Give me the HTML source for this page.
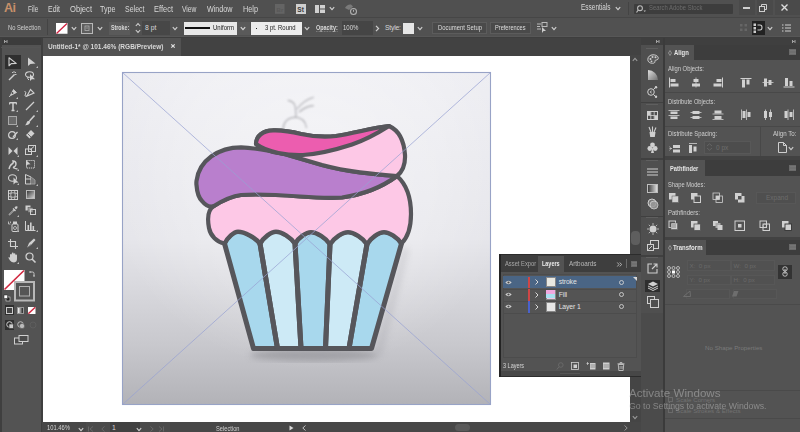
<!DOCTYPE html><html><head><meta charset="utf-8"><style>
*{margin:0;padding:0;box-sizing:border-box}
html,body{width:800px;height:432px;overflow:hidden;background:#4a4a4a;font-family:"Liberation Sans",sans-serif;color:#dcdcdc}
.a{position:absolute}
.t{position:absolute;white-space:nowrap;line-height:1}
svg.a{overflow:visible}
</style></head><body>
<div class="a" style="left:0px;top:0px;width:800px;height:17px;background:#505050;"></div>
<div class="a" style="left:0px;top:16.5px;width:800px;height:1px;background:#464646;"></div>
<div class="a" style="left:0px;top:17.5px;width:800px;height:19.5px;background:#515151;"></div>
<div class="a" style="left:0px;top:35.5px;width:800px;height:1px;background:#575757;"></div>
<div class="a" style="left:0px;top:36.5px;width:800px;height:1.5px;background:#3e3e3e;"></div>
<div class="a" style="left:0px;top:38px;width:42.5px;height:394px;background:#3f3f3f;"></div>
<div class="a" style="left:1.5px;top:38px;width:39px;height:394px;background:#535353;"></div>
<div class="a" style="left:1.5px;top:38px;width:39px;height:7px;background:#3c3c3c;"></div>
<div class="a" style="left:43px;top:38px;width:598px;height:17.5px;background:#424242;"></div>
<div class="a" style="left:43px;top:38px;width:138px;height:17.5px;background:#525252;"></div>
<div class="a" style="left:43px;top:55.5px;width:587px;height:366.5px;background:#ffffff;"></div>
<div class="a" style="left:630px;top:55px;width:11px;height:367px;background:#454545;"></div>
<div class="a" style="left:42px;top:422px;width:599px;height:10px;background:#474747;"></div>
<div class="a" style="left:641px;top:38px;width:23px;height:394px;background:#4b4b4b;"></div>
<div class="a" style="left:664px;top:38px;width:136px;height:394px;background:#535353;"></div>
<div class="t" style="left:4px;top:2px;font-size:12.5px;color:#c8906a;font-weight:bold;letter-spacing:-0.5px;">Ai</div>
<div class="t" id="tx1" style="left:27.75px;top:4.8px;font-size:8.6px;color:#d8d8d8;;transform:scaleX(0.7396);transform-origin:0 0;">File</div>
<div class="t" id="tx2" style="left:48px;top:4.8px;font-size:8.6px;color:#d8d8d8;;transform:scaleX(0.8101);transform-origin:0 0;">Edit</div>
<div class="t" id="tx3" style="left:69.5px;top:4.8px;font-size:8.6px;color:#d8d8d8;;transform:scaleX(0.8855);transform-origin:0 0;">Object</div>
<div class="t" id="tx4" style="left:100px;top:4.8px;font-size:8.6px;color:#d8d8d8;;transform:scaleX(0.8315);transform-origin:0 0;">Type</div>
<div class="t" id="tx5" style="left:125px;top:4.8px;font-size:8.6px;color:#d8d8d8;;transform:scaleX(0.8162);transform-origin:0 0;">Select</div>
<div class="t" id="tx6" style="left:153.5px;top:4.8px;font-size:8.6px;color:#d8d8d8;;transform:scaleX(0.8704);transform-origin:0 0;">Effect</div>
<div class="t" id="tx7" style="left:182px;top:4.8px;font-size:8.6px;color:#d8d8d8;;transform:scaleX(0.7844);transform-origin:0 0;">View</div>
<div class="t" id="tx8" style="left:207px;top:4.8px;font-size:8.6px;color:#d8d8d8;;transform:scaleX(0.8339);transform-origin:0 0;">Window</div>
<div class="t" id="tx9" style="left:242.5px;top:4.8px;font-size:8.6px;color:#d8d8d8;;transform:scaleX(0.8481);transform-origin:0 0;">Help</div>
<svg class="a" style="left:274.5px;top:3.7px;" width="10" height="10" viewBox="0 0 10 10"><rect x="0" y="0" width="9.5" height="9.8" fill="#646464"/><text x="1.6" y="7.8" font-size="6" fill="#585858" font-family="Liberation Sans" font-weight="bold">Br</text></svg>
<svg class="a" style="left:295.5px;top:4px;" width="10" height="10" viewBox="0 0 10 10"><rect x="0" y="0" width="10" height="10" fill="#cfcfcf"/><text x="1.3" y="8" font-size="6.5" fill="#3a3a3a" font-family="Liberation Sans" font-weight="bold">St</text></svg>
<svg class="a" style="left:314.5px;top:5px;" width="10" height="8" viewBox="0 0 10 8"><rect x="0" y="0" width="4" height="8" fill="#d0d0d0"/><rect x="5" y="0" width="5" height="3.5" fill="#d0d0d0"/><rect x="5" y="4.5" width="5" height="3.5" fill="#d0d0d0"/></svg>
<svg class="a" style="left:329px;top:6px;" width="6" height="5" viewBox="0 0 6 5"><path d="M0.8 1.2 L3 3.6 L5.2 1.2" stroke="#cfcfcf" stroke-width="1.2" fill="none"/></svg>
<svg class="a" style="left:344px;top:3px;" width="14" height="12" viewBox="0 0 14 12"><path d="M1 5 Q3 1 7 1.5 L9 3.5 L5 7 Z" fill="#7a7a7a"/><circle cx="9.5" cy="8.5" r="3" stroke="#b0b0b0" stroke-width="1.1" fill="#505050"/><path d="M9.5 6.8 V8.8" stroke="#b0b0b0" stroke-width="1"/></svg>
<div class="t" id="tx10" style="left:581px;top:4.3px;font-size:8.2px;color:#d8d8d8;letter-spacing:0px;transform:scaleX(0.7903);transform-origin:0 0;">Essentials</div>
<svg class="a" style="left:615px;top:6px;" width="6" height="5" viewBox="0 0 6 5"><path d="M0.8 1.2 L3 3.6 L5.2 1.2" stroke="#cfcfcf" stroke-width="1.2" fill="none"/></svg>
<div class="a" style="left:633.5px;top:3.5px;width:99px;height:10.5px;background:#3d3d3d;border-radius:1px"></div>
<svg class="a" style="left:636px;top:5px;" width="11" height="8" viewBox="0 0 11 8"><circle cx="4" cy="3.2" r="2.4" stroke="#bdbdbd" stroke-width="1.1" fill="none"/><path d="M2.3 5 L0.5 7.5" stroke="#bdbdbd" stroke-width="1.2"/><path d="M7.5 5.5 L10 5.5 L8.75 7 Z" fill="#bdbdbd"/></svg>
<div class="t" id="tx11" style="left:649px;top:5.2px;font-size:6.8px;color:#6c6c6c;;transform:scaleX(0.8686);transform-origin:0 0;">Search Adobe Stock</div>
<div class="a" style="left:739px;top:0px;width:16px;height:15px;background:#4a4a4a;"></div>
<div class="a" style="left:757px;top:0px;width:16px;height:15px;background:#4a4a4a;"></div>
<div class="a" style="left:775px;top:0px;width:25px;height:15px;background:#4a4a4a;"></div>
<div class="a" style="left:628px;top:2px;width:0.8px;height:13px;background:#444;"></div>
<div class="a" style="left:743px;top:7px;width:6.5px;height:1.5px;background:#d0d0d0;"></div>
<svg class="a" style="left:759px;top:4px;" width="8" height="8" viewBox="0 0 8 8"><rect x="0.5" y="2.5" width="5" height="5" stroke="#cfcfcf" fill="none"/><path d="M2.5 2.5 V0.5 H7.5 V5.5 H5.5" stroke="#cfcfcf" fill="none"/></svg>
<svg class="a" style="left:780.5px;top:4px;" width="7" height="7" viewBox="0 0 7 7"><path d="M0.5 0.5 L6.5 6.5 M6.5 0.5 L0.5 6.5" stroke="#dcdcdc" stroke-width="1.4"/></svg>
<div class="t" id="tx12" style="left:8.4px;top:24.5px;font-size:6.8px;color:#d0d0d0;;transform:scaleX(0.8457);transform-origin:0 0;">No Selection</div>
<div class="a" style="left:47px;top:19px;width:1px;height:16px;background:#444;"></div>
<svg class="a" style="left:55.5px;top:22.5px;" width="12" height="11" viewBox="0 0 12 11"><rect x="0" y="0" width="11.5" height="10.75" fill="#fff"/><path d="M0.5 10.5 L11 0.5" stroke="#d02040" stroke-width="1.3"/></svg>
<svg class="a" style="left:70.5px;top:26px;" width="6" height="5" viewBox="0 0 6 5"><path d="M0.8 1.2 L3 3.6 L5.2 1.2" stroke="#cfcfcf" stroke-width="1.2" fill="none"/></svg>
<svg class="a" style="left:81px;top:22.5px;" width="12" height="11" viewBox="0 0 12 11"><rect x="0.5" y="0.5" width="11" height="10" fill="#5e5e5e" stroke="#b8b8b8"/><rect x="4" y="3" width="4" height="4.5" fill="none" stroke="#b0b0b0" stroke-width="0.8"/><path d="M4.8 5 H7.2" stroke="#b0b0b0" stroke-width="0.7"/></svg>
<svg class="a" style="left:96.5px;top:26px;" width="6" height="5" viewBox="0 0 6 5"><path d="M0.8 1.2 L3 3.6 L5.2 1.2" stroke="#cfcfcf" stroke-width="1.2" fill="none"/></svg>
<div class="a" style="left:108.5px;top:21.5px;width:21px;height:13px;background:#5a5a5a;"></div>
<div class="t" id="tx13" style="left:110.75px;top:24.5px;font-size:6.8px;color:#dadada;font-weight:bold;transform:scaleX(0.7792);transform-origin:0 0;">Stroke:</div>
<svg class="a" style="left:135px;top:22px;" width="6" height="12" viewBox="0 0 6 12"><path d="M0.8 4 L3 1.6 L5.2 4 M0.8 8 L3 10.4 L5.2 8" stroke="#cfcfcf" stroke-width="1.1" fill="none"/></svg>
<div class="a" style="left:142px;top:21px;width:28px;height:14px;background:#474747;"></div>
<div class="t" style="left:145px;top:24.5px;font-size:6.8px;color:#d8d8d8;;">8 pt</div>
<svg class="a" style="left:171.5px;top:26px;" width="6" height="5" viewBox="0 0 6 5"><path d="M0.8 1.2 L3 3.6 L5.2 1.2" stroke="#cfcfcf" stroke-width="1.2" fill="none"/></svg>
<div class="a" style="left:183.5px;top:21.5px;width:53px;height:13px;background:#e8e8e8;"></div>
<div class="a" style="left:185px;top:27.3px;width:25px;height:2.2px;background:#111;"></div>
<div class="t" id="tx14" style="left:212.5px;top:24.5px;font-size:6.8px;color:#1a1a1a;;transform:scaleX(0.8825);transform-origin:0 0;">Uniform</div>
<div class="a" style="left:236.5px;top:21.5px;width:13px;height:13px;background:#5a5a5a;"></div>
<svg class="a" style="left:240px;top:26px;" width="6" height="5" viewBox="0 0 6 5"><path d="M0.8 1.2 L3 3.6 L5.2 1.2" stroke="#d8d8d8" stroke-width="1.2" fill="none"/></svg>
<div class="a" style="left:251px;top:21.5px;width:50.5px;height:13px;background:#ececec;"></div>
<div class="a" style="left:255.5px;top:27.5px;width:1.5px;height:1.5px;background:#222;"></div>
<div class="t" id="tx15" style="left:265px;top:24.5px;font-size:6.8px;color:#1a1a1a;;transform:scaleX(0.8676);transform-origin:0 0;">3 pt. Round</div>
<svg class="a" style="left:304px;top:26px;" width="6" height="5" viewBox="0 0 6 5"><path d="M0.8 1.2 L3 3.6 L5.2 1.2" stroke="#cfcfcf" stroke-width="1.2" fill="none"/></svg>
<div class="t" id="tx16" style="left:316.25px;top:24.5px;font-size:6.8px;color:#dadada;font-weight:bold;border-bottom:0.8px dotted #8a8a8a;transform:scaleX(0.7995);transform-origin:0 0;">Opacity:</div>
<div class="a" style="left:342px;top:21px;width:31px;height:14px;background:#454545;"></div>
<div class="t" id="tx17" style="left:343px;top:24.5px;font-size:6.8px;color:#d8d8d8;;transform:scaleX(0.8913);transform-origin:0 0;">100%</div>
<svg class="a" style="left:374.5px;top:25px;" width="5" height="7" viewBox="0 0 5 7"><path d="M1 0.8 L3.6 3.5 L1 6.2" stroke="#cfcfcf" stroke-width="1.2" fill="none"/></svg>
<div class="t" style="left:385px;top:24.5px;font-size:6.8px;color:#d6d6d6;letter-spacing:-0.2px;">Style:</div>
<div class="a" style="left:402.5px;top:22.5px;width:11.5px;height:11px;background:#e6e6e6;"></div>
<svg class="a" style="left:417px;top:26px;" width="6" height="5" viewBox="0 0 6 5"><path d="M0.8 1.2 L3 3.6 L5.2 1.2" stroke="#cfcfcf" stroke-width="1.2" fill="none"/></svg>
<div class="a" style="left:432px;top:22px;width:54.5px;height:12px;background:#4a4a4a;border:1px solid #5c5c5c"></div>
<div class="t" id="tx18" style="left:437.5px;top:24.7px;font-size:6.8px;color:#dedede;;transform:scaleX(0.8689);transform-origin:0 0;">Document Setup</div>
<div class="a" style="left:489.5px;top:22px;width:41px;height:12px;background:#4a4a4a;border:1px solid #5c5c5c"></div>
<div class="t" id="tx19" style="left:495px;top:24.7px;font-size:6.8px;color:#dedede;;transform:scaleX(0.8321);transform-origin:0 0;">Preferences</div>
<svg class="a" style="left:537px;top:22px;" width="11" height="11" viewBox="0 0 11 11"><path d="M0 2 H4 M0 4.5 H3 M0 7 H4" stroke="#bbb" stroke-width="1"/><rect x="5" y="0.5" width="5" height="4" fill="none" stroke="#bbb"/><path d="M5 5 L9 9 L6.5 9 L5 11 Z" fill="#ccc"/></svg>
<svg class="a" style="left:550.5px;top:26px;" width="6" height="5" viewBox="0 0 6 5"><path d="M0.8 1.2 L3 3.6 L5.2 1.2" stroke="#cfcfcf" stroke-width="1.2" fill="none"/></svg>
<svg class="a" style="left:740px;top:24px;" width="7" height="7" viewBox="0 0 7 7"><rect x="0" y="0" width="2.5" height="2.5" fill="#666"/><rect x="4.5" y="0" width="2.5" height="2.5" fill="#666"/><rect x="0" y="4.5" width="2.5" height="2.5" fill="#666"/><rect x="4.5" y="4.5" width="2.5" height="2.5" fill="#666"/></svg>
<div class="a" style="left:751.5px;top:21px;width:13px;height:13.5px;background:#222;"></div>
<svg class="a" style="left:753px;top:22.5px;" width="10" height="11" viewBox="0 0 10 11"><rect x="0.5" y="0.5" width="2.5" height="2.5" fill="#ccc"/><rect x="0.5" y="4" width="2.5" height="2.5" fill="#ccc"/><rect x="0.5" y="7.5" width="2.5" height="2.5" fill="#ccc"/><path d="M4.5 2 H7 Q9 2 9 4.5 Q9 7 7 7 H4.5" stroke="#ccc" stroke-width="1.1" fill="none"/></svg>
<svg class="a" style="left:767px;top:26px;" width="6" height="5" viewBox="0 0 6 5"><path d="M0.8 1.2 L3 3.6 L5.2 1.2" stroke="#cfcfcf" stroke-width="1.2" fill="none"/></svg>
<svg class="a" style="left:782px;top:24px;" width="9" height="8" viewBox="0 0 9 8"><path d="M0 1 H1.5 M3 1 H9 M0 4 H1.5 M3 4 H9 M0 7 H1.5 M3 7 H9" stroke="#cfcfcf" stroke-width="1.1"/></svg>
<div class="t" id="tx20" style="left:48px;top:43px;font-size:7.4px;color:#d8d8d8;font-weight:bold;transform:scaleX(0.8827);transform-origin:0 0;">Untitled-1* @ 101.46% (RGB/Preview)</div>
<svg class="a" style="left:170.5px;top:44px;" width="4" height="4" viewBox="0 0 4 4"><path d="M0.3 0.3 L3.7 3.7 M3.7 0.3 L0.3 3.7" stroke="#e0e0e0" stroke-width="1.2"/></svg>
<svg class="a" style="left:4px;top:40px;" width="4" height="3" viewBox="0 0 4 3"><path d="M0.5 0 V3 M3 0 V3" stroke="#bbb" stroke-width="0.8"/><path d="M1 1.5 H2.5" stroke="#bbb" stroke-width="0.8"/></svg>
<div class="a" style="left:1px;top:47px;width:39px;height:1px;background:#555;"></div>
<div class="a" style="left:4.5px;top:55px;width:16px;height:13.5px;background:#2f2f2f;"></div>
<svg class="a" style="left:7.5px;top:57px;" width="9" height="10" viewBox="0 0 9 10"><path d="M1 0.8 L1 8.8 L3.2 6.6 L8.2 6.4 Z" stroke="#d0d0d0" stroke-width="1.1" fill="none" stroke-linejoin="round"/></svg>
<svg class="a" style="left:26.5px;top:56.5px;" width="9" height="10" viewBox="0 0 9 10"><path d="M1 0.5 L1 9 L3.4 6.9 L8.5 6.6 Z" fill="#d0d0d0"/></svg>
<svg class="a" style="left:36px;top:66px;" width="2" height="2" viewBox="0 0 2 2"><path d="M2 0 V2 H0 Z" fill="#bdbdbd"/></svg>
<svg class="a" style="left:8px;top:71px;" width="9" height="10" viewBox="0 0 9 10"><path d="M1 9 L6.5 3.5" stroke="#d0d0d0" stroke-width="1.4"/><path d="M6 0 V2 M8.5 3.5 H6.5 M4 1 L5 2 M8 1 L7 2" stroke="#d0d0d0" stroke-width="0.9"/></svg>
<svg class="a" style="left:24.5px;top:71px;" width="11" height="10" viewBox="0 0 11 10"><ellipse cx="4.5" cy="3.5" rx="4" ry="2.8" stroke="#d0d0d0" stroke-width="1.1" fill="none"/><path d="M3 6 Q2 8 4 9" stroke="#d0d0d0" stroke-width="1" fill="none"/><path d="M5 3 L5 10 L6.8 8.3 L10 8.2 Z" fill="#d0d0d0"/></svg>
<svg class="a" style="left:8px;top:88px;" width="9" height="10" viewBox="0 0 9 10"><path d="M2 8 L1 9 M2.2 7.8 L5.5 1.5 L8.5 4.5 L2.2 7.8 Z" fill="#d0d0d0" stroke="#d0d0d0" stroke-width="0.8"/><circle cx="4.5" cy="5" r="0.9" fill="#4b4b4b"/></svg>
<svg class="a" style="left:16px;top:97px;" width="2" height="2" viewBox="0 0 2 2"><path d="M2 0 V2 H0 Z" fill="#bdbdbd"/></svg>
<svg class="a" style="left:24px;top:88px;" width="11" height="10" viewBox="0 0 11 10"><path d="M3 8 L6.5 1.5 L10 5 Z" fill="none" stroke="#d0d0d0" stroke-width="1.1"/><path d="M3 8 Q0 9 1.5 6 Q2.5 4 0.5 3" stroke="#d0d0d0" stroke-width="1" fill="none"/></svg>
<svg class="a" style="left:9px;top:102px;" width="8" height="9" viewBox="0 0 8 9"><path d="M0.5 0.8 H7.5 M4 0.8 V8.5 M2.5 8.5 H5.5" stroke="#d0d0d0" stroke-width="1.5"/><path d="M0.6 0.5 V2.5 M7.4 0.5 V2.5" stroke="#d0d0d0" stroke-width="1.1"/></svg>
<svg class="a" style="left:16px;top:110px;" width="2" height="2" viewBox="0 0 2 2"><path d="M2 0 V2 H0 Z" fill="#bdbdbd"/></svg>
<svg class="a" style="left:25px;top:101px;" width="10" height="10" viewBox="0 0 10 10"><path d="M1 9 L9 1" stroke="#d0d0d0" stroke-width="1.2"/></svg>
<svg class="a" style="left:36px;top:110px;" width="2" height="2" viewBox="0 0 2 2"><path d="M2 0 V2 H0 Z" fill="#bdbdbd"/></svg>
<svg class="a" style="left:8px;top:116px;" width="9" height="9" viewBox="0 0 9 9"><rect x="0.5" y="0.5" width="8" height="8" fill="#6a6a6a" stroke="#a8a8a8"/></svg>
<svg class="a" style="left:16px;top:125px;" width="2" height="2" viewBox="0 0 2 2"><path d="M2 0 V2 H0 Z" fill="#bdbdbd"/></svg>
<svg class="a" style="left:25px;top:115px;" width="10" height="11" viewBox="0 0 10 11"><path d="M9.5 0.5 L4.5 6" stroke="#d0d0d0" stroke-width="1.6"/><path d="M4.6 5.8 Q2 5.5 1.5 8 Q1.2 9.5 0 10.3 Q3.5 10.5 4.8 8.2 Q5.5 7 4.6 5.8 Z" fill="#d0d0d0"/></svg>
<svg class="a" style="left:36px;top:125px;" width="2" height="2" viewBox="0 0 2 2"><path d="M2 0 V2 H0 Z" fill="#bdbdbd"/></svg>
<svg class="a" style="left:8px;top:129px;" width="10" height="10" viewBox="0 0 10 10"><circle cx="4" cy="6" r="3.4" stroke="#d0d0d0" stroke-width="1.2" fill="none"/><path d="M5 8 L9.5 3" stroke="#d0d0d0" stroke-width="1.2"/></svg>
<svg class="a" style="left:16px;top:138px;" width="2" height="2" viewBox="0 0 2 2"><path d="M2 0 V2 H0 Z" fill="#bdbdbd"/></svg>
<svg class="a" style="left:25px;top:129px;" width="10" height="10" viewBox="0 0 10 10"><path d="M1 6 L6 1 L9.5 4.5 L4.5 9.5 Z" fill="#d0d0d0"/><path d="M2.5 4.5 L6 8" stroke="#4b4b4b" stroke-width="0.8"/></svg>
<svg class="a" style="left:8px;top:146px;" width="10" height="10" viewBox="0 0 10 10"><path d="M0.5 1 L4.5 5 L0.5 9 Z" fill="#d0d0d0"/><path d="M9.5 1 L5.5 5 L9.5 9 Z" fill="#d0d0d0"/></svg>
<svg class="a" style="left:17px;top:155px;" width="2" height="2" viewBox="0 0 2 2"><path d="M2 0 V2 H0 Z" fill="#bdbdbd"/></svg>
<svg class="a" style="left:25px;top:145px;" width="11" height="10" viewBox="0 0 11 10"><rect x="0.5" y="4" width="6" height="5.5" stroke="#d0d0d0" fill="none"/><rect x="3.5" y="0.5" width="7" height="6" stroke="#d0d0d0" fill="none"/><path d="M5 5 L9 1.5" stroke="#d0d0d0"/></svg>
<svg class="a" style="left:36px;top:155px;" width="2" height="2" viewBox="0 0 2 2"><path d="M2 0 V2 H0 Z" fill="#bdbdbd"/></svg>
<svg class="a" style="left:8px;top:160px;" width="10" height="10" viewBox="0 0 10 10"><path d="M1 9 Q2 5 4 4 Q6 3 5 1 Q8 1 8 4 Q8 6 6 7 Q4 8 9.5 9" stroke="#d0d0d0" stroke-width="1.4" fill="none"/></svg>
<svg class="a" style="left:17px;top:169px;" width="2" height="2" viewBox="0 0 2 2"><path d="M2 0 V2 H0 Z" fill="#bdbdbd"/></svg>
<svg class="a" style="left:25px;top:159px;" width="11" height="11" viewBox="0 0 11 11"><rect x="1.5" y="1.5" width="8" height="7.5" stroke="#d0d0d0" stroke-dasharray="1.2 0.8" fill="none"/><path d="M1 1 L1 7 L2.8 5.4 L5.5 5.2 Z" fill="#d0d0d0"/></svg>
<svg class="a" style="left:7.5px;top:174px;" width="11" height="11" viewBox="0 0 11 11"><ellipse cx="4.5" cy="4" rx="4" ry="3.3" stroke="#d0d0d0" stroke-width="1.1" fill="none"/><path d="M5.5 3.5 L5.5 10.5 L7.3 8.8 L10.5 8.6 Z" fill="#d0d0d0"/></svg>
<svg class="a" style="left:17px;top:183px;" width="2" height="2" viewBox="0 0 2 2"><path d="M2 0 V2 H0 Z" fill="#bdbdbd"/></svg>
<svg class="a" style="left:25px;top:174px;" width="11" height="11" viewBox="0 0 11 11"><path d="M0.5 0.5 L6 3 L6 10 L0.5 10 Z" stroke="#d0d0d0" fill="none"/><path d="M6 3 L10 6 L10 10 L6 10" stroke="#9a9a9a" fill="#7a7a7a"/><path d="M0.5 5 H6" stroke="#d0d0d0"/></svg>
<svg class="a" style="left:36px;top:184px;" width="2" height="2" viewBox="0 0 2 2"><path d="M2 0 V2 H0 Z" fill="#bdbdbd"/></svg>
<svg class="a" style="left:8px;top:190px;" width="10" height="10" viewBox="0 0 10 10"><rect x="0.5" y="0.5" width="9" height="9" stroke="#d0d0d0" fill="none"/><path d="M0.5 3.5 Q5 2 9.5 3.5 M0.5 6.5 Q5 8 9.5 6.5 M3.5 0.5 Q2 5 3.5 9.5 M6.5 0.5 Q8 5 6.5 9.5" stroke="#d0d0d0" stroke-width="0.8" fill="none"/></svg>
<div class="a" style="left:25.5px;top:190px;width:9px;height:9px;background:linear-gradient(135deg,#3a3a3a,#d0d0d0);border:0.5px solid #bbb"></div>
<svg class="a" style="left:8px;top:205px;" width="10" height="11" viewBox="0 0 10 11"><path d="M1 10 L6 5 M5 3.5 L7.5 6" stroke="#d0d0d0" stroke-width="1.4"/><path d="M6.5 2.5 Q8 0.5 9.5 1.5 Q10 3 8 4.5 Z" fill="#d0d0d0"/><path d="M1.2 9.8 L5.3 5.7" stroke="#4b4b4b" stroke-width="0.5"/></svg>
<svg class="a" style="left:17px;top:215px;" width="2" height="2" viewBox="0 0 2 2"><path d="M2 0 V2 H0 Z" fill="#bdbdbd"/></svg>
<svg class="a" style="left:25px;top:205px;" width="11" height="10" viewBox="0 0 11 10"><rect x="0.5" y="0.5" width="5" height="5" fill="#d0d0d0"/><rect x="3" y="2.5" width="5" height="5" fill="#9a9a9a" stroke="#4b4b4b" stroke-width="0.5"/><rect x="5.5" y="4.5" width="5" height="5" stroke="#d0d0d0" fill="none"/></svg>
<svg class="a" style="left:7.5px;top:221px;" width="11" height="11" viewBox="0 0 11 11"><path d="M0.5 3 H2.5 M0.5 0.5 V3 M2.5 0.5 V2" stroke="#d0d0d0" stroke-width="0.8"/><rect x="4" y="3" width="6" height="7.5" rx="1" stroke="#d0d0d0" fill="none"/><rect x="5" y="0.5" width="4" height="2.5" fill="#d0d0d0"/><circle cx="7" cy="7" r="1.5" stroke="#d0d0d0" fill="none" stroke-width="0.8"/></svg>
<svg class="a" style="left:17px;top:230px;" width="2" height="2" viewBox="0 0 2 2"><path d="M2 0 V2 H0 Z" fill="#bdbdbd"/></svg>
<svg class="a" style="left:25px;top:221px;" width="11" height="10" viewBox="0 0 11 10"><path d="M0.5 0 V9.5 H10.5" stroke="#d0d0d0" fill="none"/><rect x="2.5" y="4" width="1.6" height="5.5" fill="#d0d0d0"/><rect x="5" y="1.5" width="1.6" height="8" fill="#d0d0d0"/><rect x="7.5" y="5" width="1.6" height="4.5" fill="#d0d0d0"/></svg>
<svg class="a" style="left:36px;top:230px;" width="2" height="2" viewBox="0 0 2 2"><path d="M2 0 V2 H0 Z" fill="#bdbdbd"/></svg>
<svg class="a" style="left:8px;top:239px;" width="10" height="10" viewBox="0 0 10 10"><path d="M2.5 0 V7.5 H10 M0 2.5 H7.5 V10" stroke="#d0d0d0" stroke-width="1.1" fill="none"/></svg>
<svg class="a" style="left:26px;top:238px;" width="10" height="11" viewBox="0 0 10 11"><path d="M1 10 L3 5 L8 0.5 L9.5 2 L5 7 Z" fill="#d0d0d0"/><path d="M1 10 L5 6.5" stroke="#4b4b4b" stroke-width="0.6"/></svg>
<svg class="a" style="left:36px;top:247px;" width="2" height="2" viewBox="0 0 2 2"><path d="M2 0 V2 H0 Z" fill="#bdbdbd"/></svg>
<svg class="a" style="left:8px;top:252px;" width="10" height="11" viewBox="0 0 10 11"><path d="M2 6 V3 Q2 2 3 2 Q3.8 2 3.8 3 V1.5 Q3.8 0.6 4.7 0.6 Q5.6 0.6 5.6 1.5 V2 Q5.6 1.2 6.5 1.2 Q7.4 1.2 7.4 2.2 V3.2 Q7.5 2.5 8.3 2.6 Q9 2.8 9 3.6 V7 Q9 10 6 10.5 Q3.5 10.5 2 8.5 L0.5 6 Q0.3 5 1.2 5 Z" fill="#d0d0d0"/></svg>
<svg class="a" style="left:17px;top:262px;" width="2" height="2" viewBox="0 0 2 2"><path d="M2 0 V2 H0 Z" fill="#bdbdbd"/></svg>
<svg class="a" style="left:25px;top:252px;" width="11" height="11" viewBox="0 0 11 11"><circle cx="4.5" cy="4.5" r="3.5" stroke="#d0d0d0" stroke-width="1.2" fill="none"/><path d="M7 7 L10.5 10.5" stroke="#d0d0d0" stroke-width="1.6"/></svg>
<svg class="a" style="left:4px;top:270px;" width="21" height="21" viewBox="0 0 21 21"><rect x="0" y="0" width="20.5" height="20" fill="#fff"/><path d="M0.5 19.5 L20 0.5" stroke="#d0263e" stroke-width="1.6"/></svg>
<svg class="a" style="left:13.5px;top:280.5px;" width="22" height="21" viewBox="0 0 22 21"><rect x="0" y="0" width="21" height="20.5" fill="#b8b8b8"/><rect x="2" y="2" width="17" height="16.5" fill="#555"/><rect x="5.5" y="5.5" width="10" height="9.5" fill="#555" stroke="#b0b0b0" stroke-width="1"/></svg>
<svg class="a" style="left:29px;top:271px;" width="6" height="6" viewBox="0 0 6 6"><path d="M0.5 1 H3.5 Q5 1 5 2.5 V5.5" stroke="#d0d0d0" stroke-width="0.9" fill="none"/><path d="M0 1 L1.5 0 V2 Z M5 6 L4 4.5 H6 Z" fill="#d0d0d0"/></svg>
<svg class="a" style="left:4px;top:294.5px;" width="6" height="6" viewBox="0 0 6 6"><rect x="2" y="2" width="4" height="4" fill="#222" stroke="#ddd" stroke-width="0.6"/><rect x="0" y="0" width="3.5" height="3.5" fill="#fff" stroke="#222" stroke-width="0.5"/></svg>
<div class="a" style="left:4.5px;top:305px;width:9px;height:10px;background:#2f2f2f;"></div>
<svg class="a" style="left:5.5px;top:306.5px;" width="7" height="7" viewBox="0 0 7 7"><rect x="0.5" y="0.5" width="6" height="6" fill="#444" stroke="#ccc"/></svg>
<div class="a" style="left:17px;top:306.5px;width:6.5px;height:7px;background:linear-gradient(90deg,#fff,#222);border:0.5px solid #999"></div>
<svg class="a" style="left:28px;top:306.5px;" width="8" height="7" viewBox="0 0 8 7"><rect x="0" y="0" width="7.5" height="7" fill="#fff"/><path d="M0.3 6.7 L7.2 0.3" stroke="#d0263e" stroke-width="1.4"/></svg>
<div class="a" style="left:4.5px;top:320px;width:9px;height:10px;background:#2f2f2f;"></div>
<svg class="a" style="left:5.5px;top:321px;" width="8" height="8" viewBox="0 0 8 8"><circle cx="3.5" cy="3.5" r="2.8" fill="none" stroke="#ccc"/><rect x="3" y="3" width="4.5" height="4.5" fill="#ccc" stroke="#2f2f2f" stroke-width="0.6"/></svg>
<svg class="a" style="left:16.5px;top:321px;" width="8" height="8" viewBox="0 0 8 8"><circle cx="3.5" cy="3.5" r="2.8" fill="none" stroke="#bbb"/><circle cx="5" cy="5" r="2.6" fill="#bbb" stroke="#4b4b4b" stroke-width="0.5"/></svg>
<svg class="a" style="left:28.5px;top:321px;" width="8" height="8" viewBox="0 0 8 8"><circle cx="4" cy="4" r="3" fill="none" stroke="#5e5e5e"/></svg>
<svg class="a" style="left:14px;top:335px;" width="15" height="10" viewBox="0 0 15 10"><rect x="0.5" y="3" width="8" height="6" stroke="#d0d0d0" fill="#4b4b4b"/><rect x="5" y="0.5" width="9" height="6" stroke="#d0d0d0" fill="#4b4b4b"/></svg>
<svg class="a" style="left:0px;top:0px;" width="800" height="432" viewBox="0 0 800 432">
<defs>
<linearGradient id="bgG" x1="0" y1="0" x2="0" y2="1">
<stop offset="0" stop-color="#ededf2"/>
<stop offset="0.5" stop-color="#e5e5ea"/>
<stop offset="0.62" stop-color="#dbdbe0"/>
<stop offset="0.82" stop-color="#c8c8cd"/>
<stop offset="1" stop-color="#b2b2b7"/>
</linearGradient>
<radialGradient id="radG" cx="310" cy="160" r="210" gradientUnits="userSpaceOnUse"><stop offset="0" stop-color="#ffffff" stop-opacity="0.45"/><stop offset="0.6" stop-color="#ffffff" stop-opacity="0.25"/><stop offset="1" stop-color="#ffffff" stop-opacity="0"/></radialGradient>
<filter id="blur3"><feGaussianBlur stdDeviation="3"/></filter>
<filter id="blur1"><feGaussianBlur stdDeviation="0.9"/></filter>
</defs>
<rect x="122" y="72" width="369" height="333" fill="url(#bgG)"/>
<rect x="122" y="72" width="369" height="333" fill="url(#radG)"/>
<ellipse cx="314" cy="355" rx="64" ry="6.5" fill="#8a8a90" opacity="0.6" filter="url(#blur3)"/>
<path d="M403 246 L409 250 L382 356 L374 352 Z" fill="#9a9aa0" opacity="0.25" filter="url(#blur3)"/>
<g stroke="#adadb2" stroke-width="1.15" fill="none" filter="url(#blur1)">
<path d="M283 129 Q284 118 295 117.3 Q305 117.5 306.5 128"/>
<path d="M296 117.3 Q296 106 294 103.5 Q291 100.5 287.7 100.4"/>
<path d="M297 109 Q304 100 313.8 97.3"/>
<path d="M299.2 112 Q306 106 313.8 105.6"/>
</g>
<g stroke="#56565b" stroke-width="5" stroke-linejoin="round">
<path d="M224.5 243.5 L253.5 348.5 L371.5 348.5 L401.5 243.5 C398.0 237.5 389.2 232.0 384.0 232.0 C378.9 232.0 370.4 238.0 367.0 244.0 C363.2 238.0 353.7 232.0 348.0 232.0 C342.6 232.0 333.6 238.0 330.0 244.0 C326.2 238.0 316.7 232.0 311.0 232.0 C306.2 232.0 298.2 237.5 295.0 243.5 C291.2 237.5 281.7 231.5 276.0 231.5 C271.2 231.5 263.2 237.5 260.0 243.5 C255.6 237.5 244.6 231.5 238.0 231.5 C233.9 231.5 227.2 237.5 224.5 243.5  Z" fill="#a8d8ed"/>
<path d="M260 243.5 C263.2 237.5 271.2 231.5 276.0 231.5 C281.7 231.5 291.2 237.5 295.0 243.5  L301 348.5 L277.5 348.5 Z" fill="#cdeaf6"/>
<path d="M330 244 C333.6 238.0 342.6 232.0 348.0 232.0 C353.7 232.0 363.2 238.0 367.0 244.0  L349 348.5 L325.5 348.5 Z" fill="#cdeaf6"/>
<path d="M260 243.5 L277.5 348.5 M295 243.5 L301 348.5 M330 244 L325.5 348.5 M367 244 L349 348.5" fill="none"/>
</g>
<g stroke="#56565b" stroke-width="4.2" stroke-linejoin="round">
<path d="M214 206 C207 210 207.5 220 209 228 C210.5 236 217 242 224.5 243.5 C227.2 237.5 233.9 231.5 238.0 231.5 C244.6 231.5 255.6 237.5 260.0 243.5 C263.2 237.5 271.2 231.5 276.0 231.5 C281.7 231.5 291.2 237.5 295.0 243.5 C298.2 237.5 306.2 232.0 311.0 232.0 C316.7 232.0 326.2 238.0 330.0 244.0 C333.6 238.0 342.6 232.0 348.0 232.0 C353.7 232.0 363.2 238.0 367.0 244.0 C370.4 238.0 378.9 232.0 384.0 232.0 C389.2 232.0 398.0 237.5 401.5 243.5  C409 236 411 226 411 214 C411 198 406 184 397 176 C378 190 360 195 342 197.5 C335 198 320 198 300 196.5 C280 195 260 193.5 241 195 C233 196 225 199 214 206 Z" fill="#fdc8e6"/>
<path d="M397 176 C372 174 348 172 322 165 C305 160 295 157 287 154.7 C272 151.3 258 148 241 147.3 C219 147.3 199 160 196.5 181 C196.3 183 196.3 184 196.5 185 C197 192 199 198 202 201 C206 206 210 207.5 214 206 C225 199 233 196 241 195 C260 193.5 280 195 300 196.5 C320 198 335 198 342 197.5 C360 195 378 190 397 176 Z" fill="#b97fcd"/>
<path d="M256 144 C257 136 263 131 273 130.4 C285 130 293 132 301 134 C315 137 326 137 336 136 C355 133 372 128 389 126 C398 130 404 140 405 155 C405.5 165 402 172 397 176 C372 174 348 172 322 165 C305 160 295 157 287 154.7 C272 151.3 262 149 256 144 Z" fill="#fdc8e6"/>
<path d="M256 144 C256 136 263 130.5 273 130.4 C285 130 293 132 301 134 C315 137 326 137 336 136 C355 133 372 128 389 126 C378 133 368 139 352 144.5 C335 150 320 154 303 155 C288 155.5 268 153 256 144 Z" fill="#ec5daf"/>
</g>
<rect x="122.5" y="72.5" width="368" height="332" fill="none" stroke="#98a3c6" stroke-width="1.1"/>
<path d="M122.5 72.5 L490.5 404.5 M490.5 72.5 L122.5 404.5" stroke="#97a2d2" stroke-width="0.9" opacity="0.8"/>
</svg>
<svg class="a" style="left:632px;top:57px;" width="6" height="5" viewBox="0 0 6 5"><path d="M0.8 3.8 L3 1.4 L5.2 3.8" stroke="#9a9a9a" stroke-width="1.1" fill="none"/></svg>
<div class="a" style="left:631px;top:230.5px;width:8.5px;height:14.5px;background:#5e5e5e;border-radius:4px"></div>
<svg class="a" style="left:632px;top:414.5px;" width="6" height="5" viewBox="0 0 6 5"><path d="M0.8 1.2 L3 3.6 L5.2 1.2" stroke="#9a9a9a" stroke-width="1.1" fill="none"/></svg>
<div class="a" style="left:641px;top:38px;width:23px;height:7px;background:#3f3f3f;"></div>
<div class="a" style="left:641px;top:45px;width:22px;height:268px;background:#4f4f4f;"></div>
<div class="a" style="left:663px;top:38px;width:1.5px;height:394px;background:#3b3b3b;"></div>
<div class="a" style="left:646px;top:47.5px;width:12px;height:1px;background:#5f5f5f;"></div>
<div class="a" style="left:646px;top:103.5px;width:12px;height:1px;background:#5f5f5f;"></div>
<div class="a" style="left:646px;top:160px;width:12px;height:1px;background:#5f5f5f;"></div>
<div class="a" style="left:646px;top:217px;width:12px;height:1px;background:#5f5f5f;"></div>
<div class="a" style="left:646px;top:256.5px;width:12px;height:1px;background:#5f5f5f;"></div>
<div class="a" style="left:641px;top:101.5px;width:22px;height:1.5px;background:#404040;"></div>
<div class="a" style="left:641px;top:158px;width:22px;height:1.5px;background:#404040;"></div>
<div class="a" style="left:641px;top:215.5px;width:22px;height:1.5px;background:#404040;"></div>
<div class="a" style="left:641px;top:255px;width:22px;height:1.5px;background:#404040;"></div>
<svg class="a" style="left:646.5px;top:53.5px;" width="12" height="10" viewBox="0 0 12 10"><path d="M6 0.8 C9.5 0.8 11.5 2.5 11.2 4.5 C11 6 9 6 8.3 6.3 C7.5 6.8 8.5 8.2 7.2 9 C5.5 9.8 0.8 9.2 0.8 5.5 C0.8 2.8 3 0.8 6 0.8 Z" stroke="#cfcfcf" stroke-width="1" fill="#5a5a5a"/><circle cx="3.5" cy="5" r="1" fill="#cfcfcf"/><circle cx="5.5" cy="3" r="1" fill="#cfcfcf"/><circle cx="8.5" cy="3.2" r="1" fill="#cfcfcf"/><circle cx="4.5" cy="7.3" r="0.9" fill="#cfcfcf"/></svg>
<div class="a" style="left:647.5px;top:70px;width:10px;height:10px;border-top-right-radius:10px;background:linear-gradient(135deg,#e0e0e0,#707070)"></div>
<svg class="a" style="left:646px;top:86px;" width="12" height="12" viewBox="0 0 12 12"><circle cx="5" cy="6" r="3.3" stroke="#cfcfcf" stroke-width="1" fill="none"/><path d="M5.8 4.8 L4 6 L5.8 7.2" stroke="#cfcfcf" stroke-width="0.8" fill="none"/><path d="M7.5 3.5 L9.5 1.5 M7.5 8.5 L9.5 10.5" stroke="#cfcfcf"/><circle cx="10" cy="1.3" r="1.2" fill="#cfcfcf"/><circle cx="10" cy="10.7" r="1.2" fill="#cfcfcf"/></svg>
<svg class="a" style="left:647px;top:111px;" width="11" height="9" viewBox="0 0 11 9"><rect x="0.5" y="0.5" width="10" height="8" stroke="#cfcfcf" fill="none"/><path d="M0.5 4.5 H10.5 M3.8 0.5 V8.5 M7.2 0.5 V8.5" stroke="#cfcfcf" stroke-width="0.8"/><rect x="1" y="1" width="2.5" height="3" fill="#cfcfcf"/><rect x="7.5" y="5" width="2.5" height="3" fill="#cfcfcf"/></svg>
<svg class="a" style="left:647px;top:126px;" width="11" height="12" viewBox="0 0 11 12"><path d="M2.5 6 H8.5 L7.8 11 H3.2 Z" fill="#cfcfcf"/><path d="M4 6 L2 1 M5.5 6 L5.5 0.5 M7 6 L9 1.5" stroke="#cfcfcf" stroke-width="1.1"/></svg>
<svg class="a" style="left:647px;top:142px;" width="11" height="12" viewBox="0 0 11 12"><circle cx="5.5" cy="3" r="2.4" fill="#cfcfcf"/><circle cx="2.8" cy="6.5" r="2.4" fill="#cfcfcf"/><circle cx="8.2" cy="6.5" r="2.4" fill="#cfcfcf"/><path d="M5.5 5 L4 11 H7 Z" fill="#cfcfcf"/></svg>
<svg class="a" style="left:647px;top:168px;" width="11" height="8" viewBox="0 0 11 8"><path d="M0 1 H11 M0 4 H11 M0 7 H11" stroke="#cfcfcf" stroke-width="1.2"/></svg>
<div class="a" style="left:647px;top:183.5px;width:11px;height:9px;background:linear-gradient(90deg,#3c3c3c,#dcdcdc);border:1px solid #bdbdbd"></div>
<svg class="a" style="left:646.5px;top:198px;" width="12" height="12" viewBox="0 0 12 12"><circle cx="5" cy="5" r="4" stroke="#cfcfcf" fill="#7a7a7a"/><circle cx="7" cy="7" r="4" stroke="#cfcfcf" fill="#9a9a9a" opacity="0.85"/></svg>
<svg class="a" style="left:646.5px;top:223px;" width="12" height="12" viewBox="0 0 12 12"><circle cx="6" cy="6" r="3.5" fill="#cfcfcf"/><g stroke="#cfcfcf" stroke-width="0.8"><path d="M6 0 V2 M6 10 V12 M0 6 H2 M10 6 H12 M1.8 1.8 L3.2 3.2 M8.8 8.8 L10.2 10.2 M1.8 10.2 L3.2 8.8 M8.8 3.2 L10.2 1.8"/></g></svg>
<svg class="a" style="left:646.5px;top:240px;" width="12" height="12" viewBox="0 0 12 12"><rect x="3.5" y="0.5" width="8" height="8" stroke="#cfcfcf" fill="none"/><rect x="0.5" y="4.5" width="6" height="6" stroke="#cfcfcf" fill="#4f4f4f"/><path d="M1.5 9.5 L5 6" stroke="#cfcfcf"/></svg>
<svg class="a" style="left:647px;top:263px;" width="11" height="11" viewBox="0 0 11 11"><path d="M5 1 H1 V10 H10 V6" stroke="#cfcfcf" stroke-width="1.1" fill="none"/><path d="M5 6 L10 1 M6.5 1 H10 V4.5" stroke="#cfcfcf" stroke-width="1.1" fill="none"/></svg>
<div class="a" style="left:644.5px;top:279.5px;width:15.5px;height:12px;background:#2e2e2e;"></div>
<svg class="a" style="left:646.5px;top:280.5px;" width="12" height="10" viewBox="0 0 12 10"><path d="M6 0.5 L11 3 L6 5.5 L1 3 Z" fill="#cfcfcf"/><path d="M1 5 L6 7.5 L11 5 M1 7 L6 9.5 L11 7" stroke="#cfcfcf" stroke-width="1" fill="none"/></svg>
<svg class="a" style="left:646.5px;top:296px;" width="12" height="12" viewBox="0 0 12 12"><rect x="0.5" y="0.5" width="7" height="7" stroke="#cfcfcf" fill="none"/><rect x="3.5" y="3.5" width="8" height="8" stroke="#cfcfcf" fill="#4f4f4f"/></svg>
<div class="a" style="left:664.5px;top:38px;width:135.5px;height:7px;background:#3f3f3f;"></div>
<div class="a" style="left:664.5px;top:44.8px;width:135.5px;height:15.5px;background:#3d3d3d;"></div>
<div class="a" style="left:665px;top:44.8px;width:28.5px;height:15.5px;background:#535353;"></div>
<svg class="a" style="left:668px;top:49.8px;" width="4" height="6" viewBox="0 0 4 6"><path d="M2 0.5 L3.5 3 L2 5.5 L0.5 3 Z" stroke="#aaa" stroke-width="0.7" fill="none"/></svg>
<div class="t" id="tx21" style="left:673.7px;top:49.3px;font-size:7.2px;color:#e6e6e6;font-weight:bold;transform:scaleX(0.8237);transform-origin:0 0;">Align</div>
<div class="a" style="left:789px;top:49.3px;width:7px;height:6px;background:#6a6a6a;"></div>
<svg class="a" style="left:789.5px;top:50.3px;" width="6" height="4" viewBox="0 0 6 4"><path d="M0 0.5 H6 M0 2 H6 M0 3.5 H6" stroke="#7c7c7c" stroke-width="0.6"/></svg>
<div class="t" id="tx22" style="left:667.5px;top:66px;font-size:6.8px;color:#cfcfcf;;transform:scaleX(0.8584);transform-origin:0 0;">Align Objects:</div>
<div class="a" style="left:664.5px;top:92px;width:135.5px;height:1px;background:#484848;"></div>
<div class="t" id="tx23" style="left:667.5px;top:98.5px;font-size:6.8px;color:#cfcfcf;;transform:scaleX(0.8464);transform-origin:0 0;">Distribute Objects:</div>
<div class="a" style="left:664.5px;top:125.5px;width:135.5px;height:1px;background:#484848;"></div>
<div class="t" id="tx24" style="left:667.5px;top:131px;font-size:6.8px;color:#cfcfcf;;transform:scaleX(0.8589);transform-origin:0 0;">Distribute Spacing:</div>
<div class="t" id="tx25" style="left:773px;top:131px;font-size:6.8px;color:#cfcfcf;;transform:scaleX(0.9055);transform-origin:0 0;">Align To:</div>
<div class="a" style="left:760px;top:126px;width:1px;height:30px;background:#484848;"></div>
<svg class="a" style="left:668.4px;top:76.5px;" width="12" height="11" viewBox="0 0 12 11"><path d="M1.5 0.5 V10.5" stroke="#d0d0d0"/><rect x="2.5" y="2" width="5" height="3" fill="#d0d0d0"/><rect x="2.5" y="6.5" width="8" height="3" fill="#d0d0d0"/></svg>
<svg class="a" style="left:689.7px;top:76.5px;" width="12" height="11" viewBox="0 0 12 11"><path d="M6 0.5 V10.5" stroke="#d0d0d0" stroke-width="0.8"/><rect x="3.5" y="2" width="5" height="3" fill="#d0d0d0"/><rect x="2" y="6.5" width="8" height="3" fill="#d0d0d0"/></svg>
<svg class="a" style="left:711.7px;top:76.5px;" width="12" height="11" viewBox="0 0 12 11"><path d="M10.5 0.5 V10.5" stroke="#d0d0d0"/><rect x="4.5" y="2" width="5" height="3" fill="#d0d0d0"/><rect x="1.5" y="6.5" width="8" height="3" fill="#d0d0d0"/></svg>
<svg class="a" style="left:740.2px;top:76.5px;" width="12" height="11" viewBox="0 0 12 11"><path d="M0.5 1.5 H11.5" stroke="#d0d0d0"/><rect x="2" y="2.5" width="3" height="8" fill="#d0d0d0"/><rect x="6.5" y="2.5" width="3" height="5" fill="#d0d0d0"/></svg>
<svg class="a" style="left:761.7px;top:76.5px;" width="12" height="11" viewBox="0 0 12 11"><path d="M0.5 5.5 H11.5" stroke="#d0d0d0" stroke-width="0.8"/><rect x="2" y="1.5" width="3" height="8" fill="#d0d0d0"/><rect x="6.5" y="3" width="3" height="5" fill="#d0d0d0"/></svg>
<svg class="a" style="left:783.0px;top:76.5px;" width="12" height="11" viewBox="0 0 12 11"><path d="M0.5 10 H11.5" stroke="#d0d0d0"/><rect x="2" y="1" width="3" height="8" fill="#d0d0d0"/><rect x="6.5" y="4" width="3" height="5" fill="#d0d0d0"/></svg>
<svg class="a" style="left:668.4px;top:108.9px;" width="12" height="11" viewBox="0 0 12 11"><path d="M0.5 1.5 H11.5 M0.5 6.5 H11.5" stroke="#d0d0d0" stroke-width="0.8"/><rect x="2.5" y="2.5" width="7" height="2.5" fill="#d0d0d0"/><rect x="2.5" y="7.5" width="7" height="2.5" fill="#d0d0d0"/></svg>
<svg class="a" style="left:689.7px;top:108.9px;" width="12" height="11" viewBox="0 0 12 11"><path d="M0.5 3.5 H11.5 M0.5 8.5 H11.5" stroke="#d0d0d0" stroke-width="0.8"/><rect x="2.5" y="2" width="7" height="3" fill="#d0d0d0"/><rect x="2.5" y="7" width="7" height="3" fill="#d0d0d0"/></svg>
<svg class="a" style="left:711.7px;top:108.9px;" width="12" height="11" viewBox="0 0 12 11"><path d="M0.5 5 H11.5 M0.5 10.5 H11.5" stroke="#d0d0d0" stroke-width="0.8"/><rect x="2.5" y="1.5" width="7" height="3" fill="#d0d0d0"/><rect x="2.5" y="7" width="7" height="3" fill="#d0d0d0"/></svg>
<svg class="a" style="left:740.2px;top:108.9px;" width="12" height="11" viewBox="0 0 12 11"><path d="M1.5 0.5 V11 M6.5 0.5 V11" stroke="#d0d0d0" stroke-width="0.8"/><rect x="2.5" y="2" width="3" height="7" fill="#d0d0d0"/><rect x="7.5" y="3" width="3" height="5" fill="#d0d0d0"/></svg>
<svg class="a" style="left:761.7px;top:108.9px;" width="12" height="11" viewBox="0 0 12 11"><path d="M3.5 0.5 V11 M8.5 0.5 V11" stroke="#d0d0d0" stroke-width="0.8"/><rect x="2" y="2" width="3" height="7" fill="#d0d0d0"/><rect x="7" y="3" width="3" height="5" fill="#d0d0d0"/></svg>
<svg class="a" style="left:783.0px;top:108.9px;" width="12" height="11" viewBox="0 0 12 11"><path d="M5 0.5 V11 M10.5 0.5 V11" stroke="#d0d0d0" stroke-width="0.8"/><rect x="1.5" y="2" width="3" height="7" fill="#d0d0d0"/><rect x="6.5" y="3" width="3" height="5" fill="#d0d0d0"/></svg>
<svg class="a" style="left:668.5px;top:142.5px;" width="12" height="11" viewBox="0 0 12 11"><path d="M0.5 5.5 H3" stroke="#d0d0d0" stroke-width="0.8"/><path d="M0.5 3.5 L2 5.5 L0.5 7.5" stroke="#d0d0d0" stroke-width="0.6" fill="none"/><rect x="4" y="2" width="7" height="3" fill="#d0d0d0"/><rect x="4" y="6.5" width="7" height="3" fill="#d0d0d0"/></svg>
<svg class="a" style="left:686.5px;top:142.5px;" width="12" height="11" viewBox="0 0 12 11"><path d="M2 0.5 H10" stroke="#d0d0d0" stroke-width="0.8"/><rect x="2" y="2" width="3" height="8" fill="#d0d0d0"/><rect x="6.5" y="3.5" width="3" height="5" fill="#d0d0d0"/></svg>
<div class="a" style="left:703.5px;top:141px;width:47px;height:12.5px;background:#4d4d4d;border:1px solid #585858"></div>
<svg class="a" style="left:706px;top:143px;" width="7" height="8" viewBox="0 0 7 8"><path d="M1 3 L3.5 0.8 L6 3 M1 5 L3.5 7.2 L6 5" stroke="#6a6a6a" stroke-width="0.8" fill="none"/></svg>
<div class="t" style="left:716px;top:144.5px;font-size:6.5px;color:#6e6e6e;;">0 px</div>
<svg class="a" style="left:778px;top:142px;" width="9" height="11" viewBox="0 0 9 11"><path d="M0.5 0.5 H5.5 L8.5 3.5 V10.5 H0.5 Z" stroke="#cfcfcf" fill="none"/><path d="M5.5 0.5 V3.5 H8.5" stroke="#cfcfcf" fill="none"/></svg>
<svg class="a" style="left:787.5px;top:146px;" width="6" height="5" viewBox="0 0 6 5"><path d="M0.8 1.2 L3 3.6 L5.2 1.2" stroke="#cfcfcf" stroke-width="1.1" fill="none"/></svg>
<div class="a" style="left:664.5px;top:156px;width:135.5px;height:4px;background:#424242;"></div>
<div class="a" style="left:664.5px;top:160px;width:135.5px;height:15.5px;background:#3d3d3d;"></div>
<div class="a" style="left:665px;top:160px;width:39.5px;height:15.5px;background:#535353;"></div>
<div class="t" id="tx26" style="left:670.2px;top:164.5px;font-size:7.2px;color:#e6e6e6;font-weight:bold;transform:scaleX(0.7961);transform-origin:0 0;">Pathfinder</div>
<div class="a" style="left:789px;top:164.5px;width:7px;height:6px;background:#6a6a6a;"></div>
<svg class="a" style="left:789.5px;top:165.5px;" width="6" height="4" viewBox="0 0 6 4"><path d="M0 0.5 H6 M0 2 H6 M0 3.5 H6" stroke="#7c7c7c" stroke-width="0.6"/></svg>
<div class="t" id="tx27" style="left:667.5px;top:181.5px;font-size:6.8px;color:#cfcfcf;;transform:scaleX(0.8439);transform-origin:0 0;">Shape Modes:</div>
<svg class="a" style="left:668.4px;top:191.8px;" width="12" height="12" viewBox="0 0 12 12"><rect x="1" y="1" width="6.5" height="6.5" fill="#d0d0d0"/><rect x="4" y="4" width="6.5" height="6.5" fill="#d0d0d0" stroke="#535353" stroke-width="0.5"/></svg>
<svg class="a" style="left:690.4px;top:191.8px;" width="12" height="12" viewBox="0 0 12 12"><rect x="1" y="1" width="6.5" height="6.5" fill="#d0d0d0"/><rect x="4" y="4" width="6.5" height="6.5" fill="#535353" stroke="#d0d0d0"/></svg>
<svg class="a" style="left:712.4px;top:191.8px;" width="12" height="12" viewBox="0 0 12 12"><rect x="1" y="1" width="6.5" height="6.5" fill="none" stroke="#d0d0d0" stroke-width="0.8"/><rect x="4" y="4" width="6.5" height="6.5" fill="none" stroke="#d0d0d0" stroke-width="0.8"/><rect x="4" y="4" width="3.5" height="3.5" fill="#d0d0d0"/></svg>
<svg class="a" style="left:734.4px;top:191.8px;" width="12" height="12" viewBox="0 0 12 12"><rect x="1" y="1" width="6.5" height="6.5" fill="#d0d0d0"/><rect x="4" y="4" width="6.5" height="6.5" fill="#d0d0d0"/><rect x="4" y="4" width="3.5" height="3.5" fill="#535353"/></svg>
<div class="a" style="left:755.5px;top:192px;width:40.5px;height:11.5px;background:#4f4f4f;border:1px solid #575757"></div>
<div class="t" style="left:766px;top:194.7px;font-size:6.5px;color:#6c6c6c;;">Expand</div>
<div class="t" id="tx28" style="left:667.5px;top:209.5px;font-size:6.8px;color:#cfcfcf;;transform:scaleX(0.8820);transform-origin:0 0;">Pathfinders:</div>
<svg class="a" style="left:668.4px;top:220.3px;" width="12" height="12" viewBox="0 0 12 12"><rect x="1" y="1" width="6.5" height="6.5" fill="none" stroke="#d0d0d0"/><rect x="3" y="3" width="6.5" height="6.5" fill="#d0d0d0" stroke="#535353" stroke-width="0.5"/><path d="M4 5 H8 M4 7 H8" stroke="#535353" stroke-width="0.6"/></svg>
<svg class="a" style="left:689.7px;top:220.3px;" width="12" height="12" viewBox="0 0 12 12"><rect x="1" y="1" width="6.5" height="6.5" fill="#d0d0d0"/><rect x="4" y="4" width="6.5" height="6.5" fill="#d0d0d0" stroke="#535353" stroke-width="0.8"/></svg>
<svg class="a" style="left:712.4px;top:220.3px;" width="12" height="12" viewBox="0 0 12 12"><rect x="1" y="1" width="5" height="5" fill="#d0d0d0"/><rect x="3.5" y="3" width="5" height="5" fill="#aaa"/><rect x="5.5" y="5" width="5" height="5" fill="#d0d0d0"/></svg>
<svg class="a" style="left:734.0px;top:220.3px;" width="12" height="12" viewBox="0 0 12 12"><rect x="1" y="1" width="9.5" height="9.5" fill="none" stroke="#d0d0d0"/><rect x="4" y="4" width="3.5" height="3.5" fill="#d0d0d0"/></svg>
<svg class="a" style="left:758.7px;top:220.3px;" width="12" height="12" viewBox="0 0 12 12"><rect x="1" y="1" width="6.5" height="6.5" fill="none" stroke="#d0d0d0"/><rect x="4" y="4" width="6.5" height="6.5" fill="none" stroke="#d0d0d0"/><circle cx="5.8" cy="5.8" r="1.8" fill="none" stroke="#d0d0d0" stroke-width="0.7"/></svg>
<svg class="a" style="left:780.6px;top:220.3px;" width="12" height="12" viewBox="0 0 12 12"><rect x="1" y="1" width="6.5" height="6.5" fill="#d0d0d0"/><rect x="4" y="4" width="6.5" height="6.5" fill="#d0d0d0" stroke="#333" stroke-width="0.9"/></svg>
<div class="a" style="left:664.5px;top:237px;width:135.5px;height:2.5px;background:#424242;"></div>
<div class="a" style="left:664.5px;top:239.5px;width:135.5px;height:15.5px;background:#3d3d3d;"></div>
<div class="a" style="left:665px;top:239.5px;width:41px;height:15.5px;background:#535353;"></div>
<svg class="a" style="left:668px;top:244.5px;" width="4" height="6" viewBox="0 0 4 6"><path d="M2 0.5 L3.5 3 L2 5.5 L0.5 3 Z" stroke="#aaa" stroke-width="0.7" fill="none"/></svg>
<div class="t" id="tx29" style="left:673px;top:244.0px;font-size:7.2px;color:#e6e6e6;font-weight:bold;transform:scaleX(0.8391);transform-origin:0 0;">Transform</div>
<div class="a" style="left:789px;top:244.0px;width:7px;height:6px;background:#6a6a6a;"></div>
<svg class="a" style="left:789.5px;top:245.0px;" width="6" height="4" viewBox="0 0 6 4"><path d="M0 0.5 H6 M0 2 H6 M0 3.5 H6" stroke="#7c7c7c" stroke-width="0.6"/></svg>
<svg class="a" style="left:667px;top:266px;" width="13" height="12" viewBox="0 0 13 12"><g fill="none" stroke="#cfcfcf" stroke-width="0.8"><circle cx="2" cy="2" r="1.5"/><circle cx="6.5" cy="2" r="1.5"/><circle cx="11" cy="2" r="1.5"/><circle cx="2" cy="6" r="1.5"/><circle cx="11" cy="6" r="1.5"/><circle cx="2" cy="10" r="1.5"/><circle cx="6.5" cy="10" r="1.5"/><circle cx="11" cy="10" r="1.5"/></g><rect x="5" y="4.5" width="3" height="3" fill="#fff"/></svg>
<div class="a" style="left:687px;top:260.2px;width:44px;height:10.5px;background:#515151;border:1px solid #575757"></div>
<div class="t" style="left:689.5px;top:262.7px;font-size:6.2px;color:#6a6a6a;;">X:&nbsp;&nbsp;0 px</div>
<div class="a" style="left:731px;top:260.2px;width:44px;height:10.5px;background:#515151;border:1px solid #575757"></div>
<div class="t" style="left:733.5px;top:262.7px;font-size:6.2px;color:#6a6a6a;;">W:&nbsp;&nbsp;0 px</div>
<div class="a" style="left:687px;top:274.7px;width:44px;height:10.5px;background:#515151;border:1px solid #575757"></div>
<div class="t" style="left:689.5px;top:277.2px;font-size:6.2px;color:#6a6a6a;;">Y:&nbsp;&nbsp;0 px</div>
<div class="a" style="left:731px;top:274.7px;width:44px;height:10.5px;background:#515151;border:1px solid #575757"></div>
<div class="t" style="left:733.5px;top:277.2px;font-size:6.2px;color:#6a6a6a;;">H:&nbsp;&nbsp;0 px</div>
<div class="a" style="left:778px;top:264.5px;width:14px;height:14.5px;background:#333;"></div>
<svg class="a" style="left:782px;top:266px;" width="6" height="11" viewBox="0 0 6 11"><rect x="0.8" y="0.8" width="4.4" height="4.2" rx="2" stroke="#cfcfcf" fill="none" stroke-width="0.9"/><rect x="0.8" y="6" width="4.4" height="4.2" rx="2" stroke="#cfcfcf" fill="none" stroke-width="0.9"/><path d="M3 3 V8" stroke="#cfcfcf" stroke-width="0.9"/></svg>
<div class="a" style="left:686px;top:289px;width:44px;height:10px;background:#515151;border:1px solid #575757"></div>
<div class="a" style="left:733px;top:289px;width:44px;height:10px;background:#515151;border:1px solid #575757"></div>
<svg class="a" style="left:683px;top:290px;" width="8" height="7" viewBox="0 0 8 7"><path d="M0.5 6.5 H7.5 L7 1 Z" fill="none" stroke="#6e6e6e"/></svg>
<svg class="a" style="left:731px;top:290px;" width="8" height="7" viewBox="0 0 8 7"><path d="M1 6.5 L3 1 H7.5 L5.5 6.5 Z" fill="#6e6e6e"/></svg>
<div class="a" style="left:664.5px;top:304px;width:135.5px;height:1px;background:#4a4a4a;"></div>
<div class="t" style="left:705px;top:345px;font-size:6.2px;color:#7a7a7a;;">No Shape Properties</div>
<div class="a" style="left:664.5px;top:390px;width:135.5px;height:1px;background:#4a4a4a;"></div>
<div class="a" style="left:668px;top:396.5px;width:5px;height:5px;background:#535353;border:1px solid #6a6a6a"></div>
<div class="t" style="left:676px;top:396.5px;font-size:6.2px;color:#727272;;">Scale Corners</div>
<div class="a" style="left:668px;top:408px;width:5px;height:5px;background:#535353;border:1px solid #6a6a6a"></div>
<div class="t" style="left:676px;top:408px;font-size:6.2px;color:#727272;;">Scale Strokes &amp; Effects</div>
<div class="a" style="left:664.5px;top:418px;width:135.5px;height:1px;background:#4a4a4a;"></div>
<div class="a" style="left:499px;top:253.5px;width:141.5px;height:123px;background:#2c2c2c;"></div>
<div class="a" style="left:498.8px;top:253.5px;width:1.8px;height:123px;background:#242424;"></div>
<div class="a" style="left:500.5px;top:254.5px;width:140px;height:121px;background:#535353;"></div>
<div class="a" style="left:500.5px;top:254.5px;width:140px;height:17.5px;background:#3e3e3e;"></div>
<div class="a" style="left:538px;top:256px;width:26px;height:16px;background:#535353;"></div>
<div class="t" id="tx30" style="left:505.3px;top:260.5px;font-size:6.8px;color:#a8a8a8;;transform:scaleX(0.8512);transform-origin:0 0;">Asset Expor</div>
<div class="t" id="tx31" style="left:542.4px;top:260.5px;font-size:6.8px;color:#ececec;font-weight:bold;transform:scaleX(0.8029);transform-origin:0 0;">Layers</div>
<div class="t" id="tx32" style="left:569px;top:260.5px;font-size:6.8px;color:#b8b8b8;;transform:scaleX(0.9332);transform-origin:0 0;">Artboards</div>
<svg class="a" style="left:617px;top:261.5px;" width="5" height="5" viewBox="0 0 5 5"><path d="M0.3 0.5 L2 2.5 L0.3 4.5 M2.8 0.5 L4.5 2.5 L2.8 4.5" stroke="#d0d0d0" stroke-width="0.8" fill="none"/></svg>
<div class="a" style="left:626px;top:259px;width:0.8px;height:9px;background:#6a6a6a;"></div>
<div class="a" style="left:631px;top:261px;width:6px;height:6px;background:#6a6a6a;"></div>
<svg class="a" style="left:631.5px;top:262px;" width="5" height="4" viewBox="0 0 5 4"><path d="M0 0.5 H5 M0 2 H5 M0 3.5 H5" stroke="#808080" stroke-width="0.6"/></svg>
<div class="a" style="left:502.5px;top:274px;width:134px;height:84px;background:#545454;border:1px solid #4c4c4c"></div>
<div class="a" style="left:503px;top:276.3px;width:133px;height:12.2px;background:#4a6585;"></div>
<div class="a" style="left:503px;top:288.5px;width:133px;height:0.8px;background:#4c4c4c;"></div>
<div class="a" style="left:503px;top:300.8px;width:133px;height:0.8px;background:#4c4c4c;"></div>
<div class="a" style="left:503px;top:313px;width:133px;height:0.8px;background:#4c4c4c;"></div>
<svg class="a" style="left:633px;top:277px;" width="4" height="4" viewBox="0 0 4 4"><path d="M0 0 H4 V4 Z" fill="#d8d8d8"/></svg>
<svg class="a" style="left:505.3px;top:279.90000000000003px;" width="7" height="5" viewBox="0 0 7 5"><path d="M0.3 2.5 Q3.5 -0.8 6.7 2.5 Q3.5 5.8 0.3 2.5 Z" fill="#d0d0d0"/><circle cx="3.5" cy="2.5" r="1.1" fill="#4a4a4a"/></svg>
<div class="a" style="left:527.8px;top:276.8px;width:2px;height:11.5px;background:#d04646;"></div>
<svg class="a" style="left:535px;top:279.40000000000003px;" width="4" height="6" viewBox="0 0 4 6"><path d="M0.5 0.5 L3 3 L0.5 5.5" stroke="#d8d8d8" stroke-width="1" fill="none"/></svg>
<div class="a" style="left:545.5px;top:277.40000000000003px;width:10px;height:10px;background:#e8e8e2;border:0.5px solid #888"></div>
<div class="t" style="left:558.7px;top:279.40000000000003px;font-size:6.8px;color:#e2e2e2;letter-spacing:-0.1px;">stroke</div>
<svg class="a" style="left:619px;top:279.90000000000003px;" width="5" height="5" viewBox="0 0 5 5"><circle cx="2.5" cy="2.5" r="2" fill="none" stroke="#d0d0d0" stroke-width="0.9"/></svg>
<svg class="a" style="left:505.3px;top:292.15000000000003px;" width="7" height="5" viewBox="0 0 7 5"><path d="M0.3 2.5 Q3.5 -0.8 6.7 2.5 Q3.5 5.8 0.3 2.5 Z" fill="#d0d0d0"/><circle cx="3.5" cy="2.5" r="1.1" fill="#4a4a4a"/></svg>
<div class="a" style="left:527.8px;top:289.05px;width:2px;height:11.5px;background:#d04646;"></div>
<svg class="a" style="left:535px;top:291.65000000000003px;" width="4" height="6" viewBox="0 0 4 6"><path d="M0.5 0.5 L3 3 L0.5 5.5" stroke="#d8d8d8" stroke-width="1" fill="none"/></svg>
<div class="a" style="left:545.5px;top:289.65000000000003px;width:10px;height:10px;background:#f0c8e8;border:0.5px solid #888"></div>
<div class="t" style="left:558.7px;top:291.65000000000003px;font-size:6.8px;color:#e2e2e2;letter-spacing:-0.1px;">Fill</div>
<svg class="a" style="left:619px;top:292.15000000000003px;" width="5" height="5" viewBox="0 0 5 5"><circle cx="2.5" cy="2.5" r="2" fill="none" stroke="#d0d0d0" stroke-width="0.9"/></svg>
<svg class="a" style="left:505.3px;top:304.40000000000003px;" width="7" height="5" viewBox="0 0 7 5"><path d="M0.3 2.5 Q3.5 -0.8 6.7 2.5 Q3.5 5.8 0.3 2.5 Z" fill="#d0d0d0"/><circle cx="3.5" cy="2.5" r="1.1" fill="#4a4a4a"/></svg>
<div class="a" style="left:527.8px;top:301.3px;width:2px;height:11.5px;background:#4a62cc;"></div>
<svg class="a" style="left:535px;top:303.90000000000003px;" width="4" height="6" viewBox="0 0 4 6"><path d="M0.5 0.5 L3 3 L0.5 5.5" stroke="#d8d8d8" stroke-width="1" fill="none"/></svg>
<div class="a" style="left:545.5px;top:301.90000000000003px;width:10px;height:10px;background:#e6e6e6;border:0.5px solid #888"></div>
<div class="t" style="left:558.7px;top:303.90000000000003px;font-size:6.8px;color:#e2e2e2;letter-spacing:-0.1px;">Layer 1</div>
<svg class="a" style="left:619px;top:304.40000000000003px;" width="5" height="5" viewBox="0 0 5 5"><circle cx="2.5" cy="2.5" r="2" fill="none" stroke="#d0d0d0" stroke-width="0.9"/></svg>
<div class="a" style="left:546px;top:289.5px;width:9px;height:4px;background:#f0a8e0;"></div>
<div class="a" style="left:546px;top:293.5px;width:9px;height:4px;background:#a8e0f0;"></div>
<div class="t" id="tx33" style="left:503.4px;top:363px;font-size:6.6px;color:#d6d6d6;;transform:scaleX(0.8341);transform-origin:0 0;">3 Layers</div>
<svg class="a" style="left:556px;top:362px;" width="8" height="8" viewBox="0 0 8 8"><circle cx="4.8" cy="3" r="2.3" fill="none" stroke="#6a6a6a" stroke-width="0.9"/><path d="M3 4.8 L0.8 7.5" stroke="#6a6a6a" stroke-width="1"/></svg>
<svg class="a" style="left:570.5px;top:362px;" width="8" height="8" viewBox="0 0 8 8"><rect x="0.5" y="0.5" width="7" height="7" fill="none" stroke="#cfcfcf" stroke-width="0.8"/><rect x="2.5" y="2.5" width="3.5" height="3.5" fill="#cfcfcf"/></svg>
<svg class="a" style="left:585.5px;top:362px;" width="10" height="8" viewBox="0 0 10 8"><path d="M0.5 1.5 H3 M1.5 0 V3" stroke="#cfcfcf" stroke-width="0.7"/><rect x="4" y="1" width="5.5" height="6.5" fill="#cfcfcf"/><path d="M4.5 3 H9 M4.5 5 H9" stroke="#535353" stroke-width="0.5"/></svg>
<svg class="a" style="left:601.5px;top:362px;" width="8" height="8" viewBox="0 0 8 8"><rect x="1" y="0.5" width="6.5" height="7" fill="#cfcfcf"/><path d="M1.5 3 H7 M1.5 5 H7" stroke="#535353" stroke-width="0.5"/></svg>
<svg class="a" style="left:616.5px;top:361.5px;" width="8" height="9" viewBox="0 0 8 9"><path d="M0.5 1.8 H7.5 M3 1.8 V0.6 H5 V1.8" stroke="#cfcfcf" stroke-width="0.8" fill="none"/><path d="M1.3 2.5 H6.7 L6.2 8.5 H1.8 Z" fill="none" stroke="#cfcfcf" stroke-width="0.8"/><path d="M3 4 V7 M4.2 4 V7 M5.3 4 V7" stroke="#cfcfcf" stroke-width="0.5"/></svg>
<div class="a" style="left:500.5px;top:371px;width:140px;height:4.5px;background:#474747;"></div>
<div class="a" style="left:560px;top:372.5px;width:20px;height:1.5px;background:#555;"></div>
<div class="t" id="tx34" style="left:47px;top:425.2px;font-size:6.8px;color:#d4d4d4;;transform:scaleX(0.8568);transform-origin:0 0;">101.46%</div>
<svg class="a" style="left:77.5px;top:426.5px;" width="6" height="5" viewBox="0 0 6 5"><path d="M0.8 1.2 L3 3.6 L5.2 1.2" stroke="#cfcfcf" stroke-width="1.1" fill="none"/></svg>
<div class="a" style="left:86px;top:422px;width:58px;height:10px;background:#4b4b4b;"></div>
<svg class="a" style="left:88px;top:425.5px;" width="6" height="6" viewBox="0 0 6 6"><path d="M0.5 0.5 V5.5 M5 0.5 L2 3 L5 5.5" stroke="#6a6a6a" stroke-width="0.9" fill="none"/></svg>
<svg class="a" style="left:101px;top:425.5px;" width="4" height="6" viewBox="0 0 4 6"><path d="M3.5 0.5 L0.8 3 L3.5 5.5" stroke="#6a6a6a" stroke-width="0.9" fill="none"/></svg>
<div class="a" style="left:110px;top:422px;width:30px;height:10px;background:#414141;"></div>
<div class="t" style="left:112px;top:425.2px;font-size:6.8px;color:#d4d4d4;;">1</div>
<svg class="a" style="left:135.5px;top:426.5px;" width="6" height="5" viewBox="0 0 6 5"><path d="M0.8 1.2 L3 3.6 L5.2 1.2" stroke="#cfcfcf" stroke-width="1.1" fill="none"/></svg>
<div class="a" style="left:144px;top:422px;width:26px;height:10px;background:#4b4b4b;"></div>
<svg class="a" style="left:150px;top:425.5px;" width="4" height="6" viewBox="0 0 4 6"><path d="M0.5 0.5 L3.2 3 L0.5 5.5" stroke="#6a6a6a" stroke-width="0.9" fill="none"/></svg>
<svg class="a" style="left:157.5px;top:425.5px;" width="6" height="6" viewBox="0 0 6 6"><path d="M5.5 0.5 V5.5 M1 0.5 L4 3 L1 5.5" stroke="#6a6a6a" stroke-width="0.9" fill="none"/></svg>
<div class="t" id="tx35" style="left:216px;top:425.5px;font-size:6.8px;color:#cfcfcf;;transform:scaleX(0.8402);transform-origin:0 0;">Selection</div>
<svg class="a" style="left:289px;top:425px;" width="5" height="6" viewBox="0 0 5 6"><path d="M0.5 0.5 L4.5 3 L0.5 5.5 Z" fill="#d8d8d8"/></svg>
<svg class="a" style="left:301.5px;top:425px;" width="4" height="6" viewBox="0 0 4 6"><path d="M3.5 0.5 L0.8 3 L3.5 5.5" stroke="#cfcfcf" stroke-width="0.9" fill="none"/></svg>
<div class="a" style="left:454.5px;top:423.5px;width:15px;height:7px;background:#5a5a5a;border-radius:3.5px"></div>
<svg class="a" style="left:623.5px;top:425px;" width="4" height="6" viewBox="0 0 4 6"><path d="M0.5 0.5 L3.2 3 L0.5 5.5" stroke="#9a9a9a" stroke-width="0.9" fill="none"/></svg>
<div class="t" id="tx36" style="left:629px;top:387.5px;font-size:11px;color:rgba(215,215,215,0.42);;transform:scaleX(1.0540);transform-origin:0 0;">Activate Windows</div>
<div class="t" id="tx37" style="left:629px;top:401.5px;font-size:8.7px;color:rgba(215,215,215,0.42);;transform:scaleX(1.0026);transform-origin:0 0;">Go to Settings to activate Windows.</div>
<svg class="a" style="left:656px;top:40px;" width="4" height="3" viewBox="0 0 4 3"><path d="M0.5 0 V3 M3 0 V3" stroke="#bbb" stroke-width="0.8"/><path d="M1 1.5 H2.5" stroke="#bbb" stroke-width="0.8"/></svg>
<svg class="a" style="left:792px;top:40px;" width="4" height="3" viewBox="0 0 4 3"><path d="M0.5 0 V3 M3 0 V3" stroke="#bbb" stroke-width="0.8"/><path d="M1 1.5 H2.5" stroke="#bbb" stroke-width="0.8"/></svg>
</body></html>
